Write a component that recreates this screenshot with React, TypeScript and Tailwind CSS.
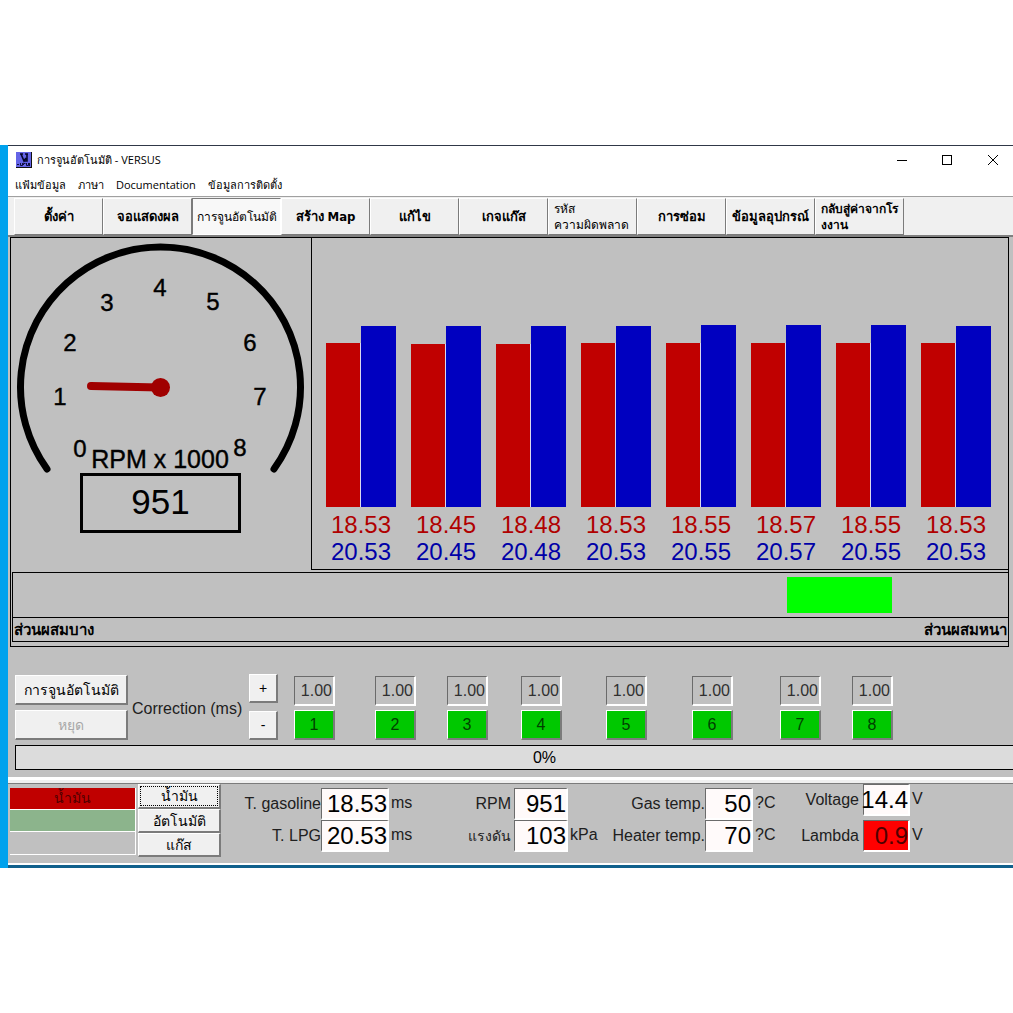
import React from "react";
import clsx from "clsx";

const tabs = [
  { label: "ตั้งค่า" },
  { label: "จอแสดงผล" },
  { label: "การจูนอัตโนมัติ", active: true },
  { label: "สร้าง Map" },
  { label: "แก้ไข" },
  { label: "เกจแก๊ส" },
  { label: "รหัส\nความผิดพลาด", light: true },
  { label: "การซ่อม" },
  { label: "ข้อมูลอุปกรณ์" },
  { label: "กลับสู่ค่าจากโร\nงงาน" },
];

const injectors = [
  { gasoline: 18.53, gas: 20.53 },
  { gasoline: 18.45, gas: 20.45 },
  { gasoline: 18.48, gas: 20.48 },
  { gasoline: 18.53, gas: 20.53 },
  { gasoline: 18.55, gas: 20.55 },
  { gasoline: 18.57, gas: 20.57 },
  { gasoline: 18.55, gas: 20.55 },
  { gasoline: 18.53, gas: 20.53 },
];

const corrections = [
  { id: 1, gap: "ml-4" },
  { id: 2, gap: "ml-10" },
  { id: 3, gap: "ml-[31px]" },
  { id: 4, gap: "ml-[33px]" },
  { id: 5, gap: "ml-11" },
  { id: 6, gap: "ml-[45px]" },
  { id: 7, gap: "ml-[47px]" },
  { id: 8, gap: "ml-[31px]" },
];

const dial = [
  { n: 0, x: 69, y: 219 },
  { n: 1, x: 49, y: 167 },
  { n: 2, x: 59, y: 113 },
  { n: 3, x: 96, y: 73 },
  { n: 4, x: 149, y: 58 },
  { n: 5, x: 202, y: 72 },
  { n: 6, x: 239, y: 113 },
  { n: 7, x: 249, y: 167 },
  { n: 8, x: 229, y: 218 },
];

const raised =
  "border border-r-2 border-b-2 border-t-white border-l-white border-r-[#7b7b7b] border-b-[#7b7b7b]";
const sunken =
  "border border-r-2 border-b-2 border-t-[#6b6b6b] border-l-[#6b6b6b] border-r-white border-b-white";

const PX_PER_MS = 8.84;

const TitleBar = () => (
  <header className="flex h-7 items-center pl-2 font-['Open_Sans','Noto_Sans',sans-serif] text-[11px]">
    <svg width="16" height="16" viewBox="0 0 16 16" className="mr-[5px]">
      <rect width="16" height="16" fill="#6464e6" />
      <path d="M0 15.5H16M15.5 0V16" stroke="#111" />
      <path
        d="M4 2H7M5 2L8 9L10 6M9 2H12M11 2V9H8"
        stroke="#05052a"
        strokeWidth="1.6"
        fill="none"
      />
      <path
        d="M1 12.5H3M4.5 11V13.5H6.5V11M7.5 13V11.5H9.5M10.5 11V13.5H12.5V11M13.5 11V14"
        stroke="#05052a"
        strokeWidth="0.9"
        fill="none"
      />
    </svg>
    <h1 className="flex-1">การจูนอัตโนมัติ - VERSUS</h1>
    <button aria-label="Minimize" className="px-[18px]">
      <svg width="10" height="10" viewBox="0 0 10 10" stroke="#000">
        <path d="M0 5.5H10" />
      </svg>
    </button>
    <button aria-label="Maximize" className="px-[17px]">
      <svg width="10" height="10" viewBox="0 0 10 10" stroke="#000" fill="none">
        <rect x="0.5" y="0.5" width="9" height="9" />
      </svg>
    </button>
    <button aria-label="Close" className="pr-[15px] pl-[19px]">
      <svg width="10" height="10" viewBox="0 0 10 10" stroke="#000">
        <path d="M0 0L10 10M10 0L0 10" />
      </svg>
    </button>
  </header>
);

const Gauge = () => (
  <div className="w-[300px] shrink-0">
    <svg width="300" height="235" viewBox="0 0 300 235" className="block">
      <path
        d="M36 231A140 140 0 1 1 263 231"
        fill="none"
        stroke="#000"
        strokeWidth="7"
        strokeLinecap="round"
      />
      <g
        fontFamily="Liberation Sans, Arial, sans-serif"
        fontSize="24"
        stroke="#000"
        strokeWidth="0.4"
      >
        {dial.map((d) => (
          <text key={d.n} x={d.x} y={d.y} textAnchor="middle">
            {d.n}
          </text>
        ))}
        <text x="149" y="230" fontSize="25" textAnchor="middle">
          RPM x 1000
        </text>
      </g>
      <path
        d="M80 148L149 149.5"
        stroke="#a00000"
        strokeWidth="8"
        strokeLinecap="round"
      />
      <circle cx="149.5" cy="149.5" r="9.5" fill="#a00000" />
    </svg>
    <output className="ml-[69px] flex h-[60px] w-[161px] items-center justify-center border-3 border-black pb-1 text-[35px] leading-none">
      951
    </output>
  </div>
);

const InjectorChart = () => (
  <div className="flex flex-1 items-end gap-[15px] border-b border-l border-black pr-[17px] pb-1 pl-[14px]">
    {injectors.map((inj, i) => (
      <div key={i} className="flex-1">
        <div className="mb-1 flex items-end">
          <div
            className="w-1/2 border-r border-[#d8d8f0] bg-[#c00000]"
            style={{ height: Math.round(inj.gasoline * PX_PER_MS) }}
          />
          <div
            className="w-1/2 bg-[#0000c0]"
            style={{ height: Math.round(inj.gas * PX_PER_MS) }}
          />
        </div>
        <div className="text-center text-2xl leading-[27px]">
          <p className="text-[#b00000]">{inj.gasoline.toFixed(2)}</p>
          <p className="text-[#0000a8]">{inj.gas.toFixed(2)}</p>
        </div>
      </div>
    ))}
  </div>
);

const MixtureBar = () => (
  <div className="mt-0.5 mb-1 ml-px border-y border-l border-black">
    <div className="flex justify-end border-b border-black pt-1 pr-[116px] pb-1">
      <div className="h-9 w-[105px] bg-[#00ff00]" />
    </div>
    <div className="flex h-[23px] items-center justify-between px-px text-[15px] leading-none font-bold">
      <span>ส่วนผสมบาง</span>
      <span>ส่วนผสมหนา</span>
    </div>
  </div>
);

const Correction = () => (
  <section className="pt-[27px] pl-[7px]">
    <div className="flex items-end">
      <div className="flex w-[113px] flex-col gap-[5px] text-sm leading-none">
        <button className={clsx(raised, "h-[30px] bg-[#f0f0f0]")}>
          การจูนอัตโนมัติ
        </button>
        <button
          disabled
          className={clsx(raised, "h-[30px] bg-[#f0f0f0] text-[#a8a8a8]")}
        >
          หยุด
        </button>
      </div>
      <span className="ml-1 w-[117px] self-center pt-1 text-[#202020]">
        Correction (ms)
      </span>
      <div className="flex flex-col gap-2 text-sm leading-none">
        <button className={clsx(raised, "h-[29px] w-[29px] bg-[#f0f0f0]")}>
          +
        </button>
        <button className={clsx(raised, "h-[29px] w-[29px] bg-[#f0f0f0]")}>
          -
        </button>
      </div>
      {corrections.map((c) => (
        <div key={c.id} className={clsx(c.gap, "flex w-[41px] flex-col gap-1")}>
          <input
            aria-label={`Correction ${c.id}`}
            defaultValue="1.00"
            className={clsx(
              sunken,
              "h-[30px] w-full pr-px text-right text-base text-[#303030]"
            )}
          />
          <button
            className={clsx(
              raised,
              "h-[30px] bg-[#00c800] text-base leading-none text-[#004000]"
            )}
          >
            {c.id}
          </button>
        </div>
      ))}
    </div>
    <div className="mt-[5px] mb-[7px] h-[25px] border-y border-l border-black bg-[#dcdcdc] pl-15 text-center leading-[23px]">
      0%
    </div>
  </section>
);

type ReadingProps = {
  label: string;
  value: string;
  unit?: string;
  labelWidth: string;
  width: string;
  alert?: boolean;
};

const Reading = ({
  label,
  value,
  unit,
  labelWidth,
  width,
  alert,
}: ReadingProps) => (
  <div className="flex items-center text-[#202020]">
    <span className={clsx(labelWidth, "text-right whitespace-nowrap")}>
      {label}
    </span>
    <output
      className={clsx(
        sunken,
        width,
        "flex h-8 items-center justify-end text-2xl leading-none",
        alert ? "bg-[#ff0000] text-[#500000]" : "bg-[#fffafa] text-black"
      )}
    >
      {value}
    </output>
    <span className="pb-0.5 pl-0.5">{unit}</span>
  </div>
);

const StatusBar = () => (
  <footer className="flex h-20 items-start border-t border-[#7b7b7b] pl-0.5">
    <div className="mt-1 w-[126px] text-center text-sm leading-5 text-[#500000]">
      <div className="h-[22px] border-r border-b border-white bg-[#c00000]">
        น้ำมัน
      </div>
      <div className="h-[22px] border-r border-b border-white bg-[#8cb48c]" />
      <div className="h-[23px] border-r border-b border-white" />
    </div>
    <div className="ml-0.5 flex w-[83px] flex-col text-sm leading-none">
      <button className={clsx(raised, "h-[25px] bg-[#f0f0f0] p-px")}>
        <span className="flex h-full items-center justify-center border border-dotted border-black">
          น้ำมัน
        </span>
      </button>
      <button className={clsx(raised, "h-6 bg-[#f0f0f0]")}>อัตโนมัติ</button>
      <button className={clsx(raised, "h-6 bg-[#f0f0f0]")}>แก๊ส</button>
    </div>
    <div className="mt-1 flex w-[209px] flex-col">
      <Reading label="T. gasoline" value="18.53" unit="ms" labelWidth="w-[100px]" width="w-[68px]" />
      <Reading label="T. LPG" value="20.53" unit="ms" labelWidth="w-[100px]" width="w-[68px]" />
    </div>
    <div className="mt-1 flex w-[175px] flex-col">
      <Reading label="RPM" value="951" labelWidth="w-[84px] pr-[3px]" width="w-[54px]" />
      <Reading label="แรงดัน" value="103" unit="kPa" labelWidth="w-[84px] pr-[3px] text-sm" width="w-[54px]" />
    </div>
    <div className="mt-1 flex w-[182px] flex-col">
      <Reading label="Gas temp." value="50" unit="?C" labelWidth="w-[100px]" width="w-[48px]" />
      <Reading label="Heater temp." value="70" unit="?C" labelWidth="w-[100px]" width="w-[48px]" />
    </div>
    <div className="flex flex-1 flex-col gap-1">
      <Reading label="Voltage" value="14.4" unit="V" labelWidth="w-[76px] pr-1" width="w-[47px]" />
      <Reading label="Lambda" value="0.9" unit="V" labelWidth="w-[76px] pr-1" width="w-[47px]" alert />
    </div>
  </footer>
);

const App = () => {
  return (
    <div className="min-h-screen bg-white py-[145px] font-['Liberation_Sans',Arial,sans-serif] text-base text-black">
      <div className="overflow-hidden bg-[#00a2ed] pl-2">
        <main className="border-t border-b-3 border-t-[#303848] border-b-[#10608c] bg-[#c0c0c0]">
          <div className="bg-white">
            <TitleBar />
            <nav className="flex h-[22px] items-center gap-3 pl-[7px] font-['Open_Sans','Noto_Sans',sans-serif] text-[11px]">
              <button>แฟ้มข้อมูล</button>
              <button>ภาษา</button>
              <button>Documentation</button>
              <button>ข้อมูลการติดตั้ง</button>
            </nav>
          </div>
          <nav className="flex border-t border-b-2 border-t-[#a0a0a0] border-b-[#808080] bg-[#f0f0f0] pt-px pl-[6px] font-['DejaVu_Sans_Condensed','DejaVu_Sans',sans-serif]">
            {tabs.map((t) => (
              <button
                key={t.label}
                className={clsx(
                  "h-[37px] w-[89px] border leading-4 whitespace-pre",
                  t.label.includes("\n")
                    ? "pl-[5px] text-left text-[12px]"
                    : t.active
                      ? "text-center text-[12px]"
                      : "text-center text-[13px]",
                  t.light || t.active ? "font-normal" : "font-bold",
                  t.active
                    ? "border-t-[#7b7b7b] border-l-[#7b7b7b] border-r-white border-b-white bg-[#f8f8f8]"
                    : "border-t-white border-l-white border-r-[#7b7b7b] border-b-[#7b7b7b]"
                )}
              >
                {t.label}
              </button>
            ))}
          </nav>
          <section className="mr-1 ml-0.5 border border-black">
            <div className="flex h-[332px]">
              <Gauge />
              <InjectorChart />
            </div>
            <MixtureBar />
          </section>
          <Correction />
          <div className="h-[6px] border-t-3 border-white bg-[#f0f0f0]" />
          <StatusBar />
          <div className="h-0.5 bg-white" />
        </main>
      </div>
    </div>
  );
};

export default App;
